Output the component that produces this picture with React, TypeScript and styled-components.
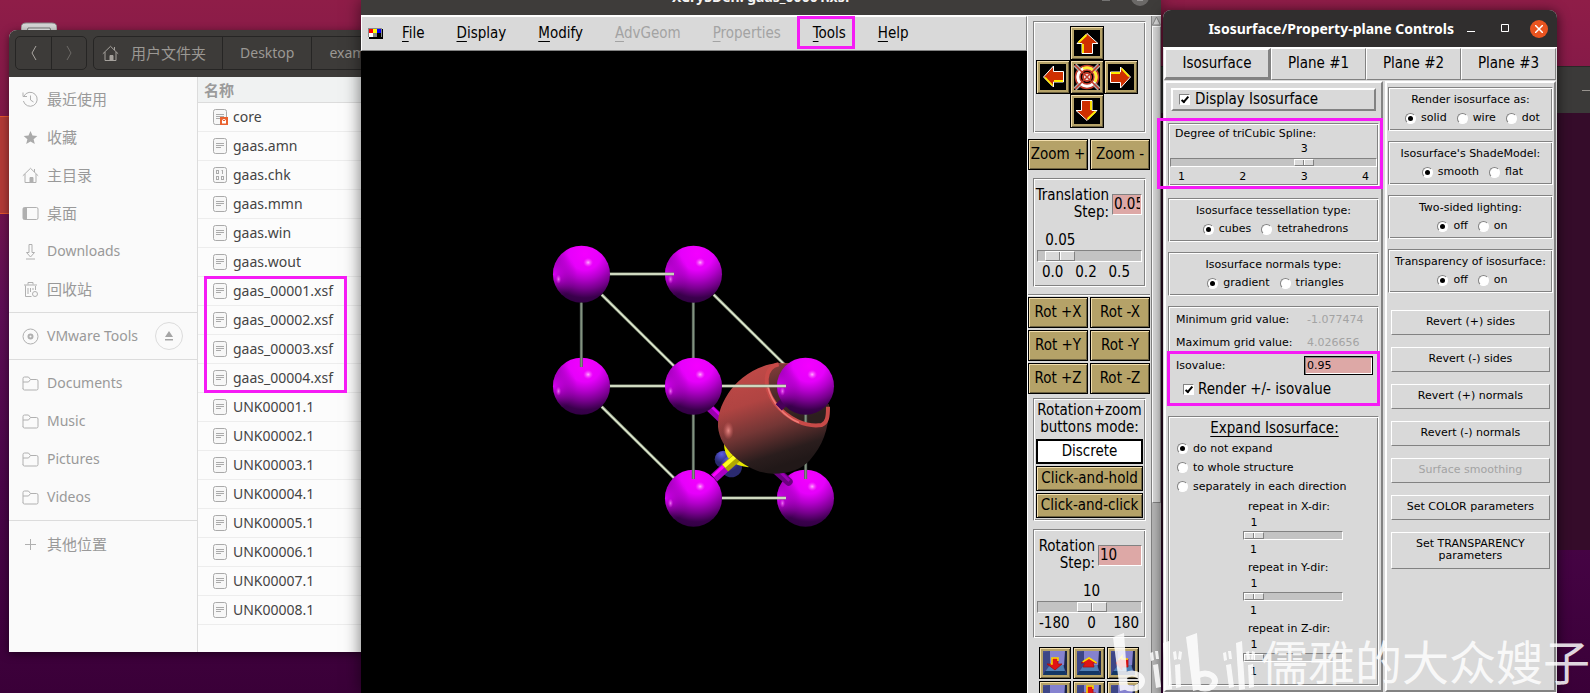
import React, { useId, useState } from "react";
import styled, { createGlobalStyle, css } from "styled-components";

const ubuntu = `"Noto Sans", "Noto Sans CJK SC", sans-serif`;
const tk = `"DejaVu Sans Condensed", "DejaVu Sans", sans-serif`;
const tkSmall = `"DejaVu Sans", sans-serif`;
const FACE = "#d9d9d9";
const DARK = "#828282";
const TAN = "#b5a268";

const GlobalStyle = createGlobalStyle`
  *, *::before, *::after { box-sizing: border-box; }
  body { margin: 0; overflow: hidden; }
  button, input { font: inherit; color: inherit; margin: 0; }
  button { padding: 0; border: 0; background: none; }
`;

const groove = css`
  border: 1px solid;
  border-color: ${DARK} #fff #fff ${DARK};
  box-shadow: inset 1px 1px 0 #fff, inset -1px -1px 0 ${DARK};
`;

const highlight = css`
  position: relative;
  &::after {
    content: "";
    position: absolute;
    border: 3px solid #f51bf5;
    pointer-events: none;
    z-index: 2;
  }
`;

/* ---------- desktop ---------- */

const Desktop = styled.main`
  position: relative;
  height: 100vh;
  overflow: hidden;
  background: linear-gradient(180deg, #8f1d48 0%, #7d1748 20%, #5e0e55 44%, #4a0549 70%, #3a0038 100%);
`;

const Drive = styled.svg`
  position: absolute;
  left: 21px;
  top: 22px;
`;

const OrangeWindow = styled.div`
  position: absolute;
  left: 0;
  top: 116px;
  width: 40px;
  height: 98px;
  background: #b23a36;
  border: solid #e2552a;
  border-width: 1px 0;
`;

const TerminalWindow = styled.div`
  position: absolute;
  right: 0;
  top: 66px;
  width: 480px;
  height: 484px;
  background: #350c2a;
  border-top: 1px solid #2a2827;
`;

const TerminalBar = styled.div`
  display: flex;
  justify-content: flex-end;
  align-items: center;
  height: 46px;
  background: #3b3a39;
  &::after {
    content: "";
    width: 8px;
    height: 1px;
    background: #98948f;
  }
`;

/* ---------- file manager ---------- */

const Files = styled.section`
  position: absolute;
  left: 9px;
  top: 30px;
  width: 480px;
  display: flex;
  flex-direction: column;
  border-radius: 8px 8px 0 0;
  background: #fcfcfc;
  box-shadow: 0 2px 8px rgba(0, 0, 0, 0.5);
  font: 14px/20px ${ubuntu};
`;

const HeaderBar = styled.header`
  display: flex;
  gap: 6px;
  height: 47px;
  padding: 6px;
  border-radius: 8px 8px 0 0;
  background: #3d3b39;
  color: #9b9894;
`;

const ButtonGroup = styled.div`
  display: flex;
  height: 34px;
  border: 1px solid #262524;
  border-radius: 5px;
`;

const HeaderButton = styled.button<{ $path?: boolean }>`
  display: flex;
  align-items: center;
  justify-content: center;
  gap: 12px;
  min-width: 35px;
  font-size: 14px;
  padding: ${(p) => (p.$path ? "0 17px" : "0")};
  white-space: nowrap;
  & + & { border-left: 1px solid #262524; }
`;

const HomeButton = styled(HeaderButton)`
  padding: 0 16px 0 8px;
  font-size: 15px;
`;

const FilesBody = styled.div`
  display: flex;
  min-height: 575px;
`;

const Sidebar = styled.nav`
  width: 189px;
  padding-top: 3px;
  background: #fafafa;
  border-right: 1px solid #dcdcdc;
  color: #999;
`;

const Places = styled.ul`
  list-style: none;
  margin: 0;
  padding: 0 0 4px;
  & + & { border-top: 1px solid #dcdcdc; padding-top: 4px; }
`;

const Place = styled.li`
  display: flex;
  align-items: center;
  justify-content: space-between;
  height: 38px;
  padding: 0 14px 0 13px;
`;

const PlaceLink = styled.a<{ $cjk?: boolean }>`
  display: flex;
  align-items: center;
  gap: 8px;
  color: inherit;
  text-decoration: none;
  white-space: nowrap;
  font-size: ${(p) => (p.$cjk ? 15 : 14)}px;
  svg { stroke: #b0b0b0; fill: none; }
`;

const Eject = styled.button`
  display: grid;
  place-items: center;
  width: 28px;
  height: 28px;
  border: 1px solid #dcdcdc;
  border-radius: 50%;
`;

const FileTable = styled.table`
  flex: 1;
  align-self: flex-start;
  border-spacing: 0;
  color: #444;
  thead th {
    height: 26px;
    padding: 0 6px;
    text-align: left;
    font-size: 15px;
    line-height: 20px;
    color: #9b9b9b;
    background: #f0f2f2;
    border-bottom: 1px solid #dcdcdc;
  }
  td {
    height: 29px;
    padding: 0 0 0 15px;
    border-bottom: 1px solid #ededed;
  }
`;

const FileGroup = styled.tbody<{ $marked?: boolean }>`
  ${(p) => p.$marked && highlight}
  &::after {
    left: 6px;
    top: -1px;
    bottom: 0;
    width: 143px;
  }
`;

const FileName = styled.span`
  display: flex;
  align-items: center;
  gap: 6px;
`;

/* ---------- crystal viewer ---------- */

const Viewer = styled.section`
  position: absolute;
  left: 361px;
  right: 429px;
  top: 0;
  bottom: 0;
  display: flex;
  flex-direction: column;
  background: ${FACE};
  box-shadow: 0 0 16px rgba(0, 0, 0, 0.55);
  font: 15px/17px ${tk};
  color: #000;
`;

const ViewerTitle = styled.header`
  position: relative;
  display: flex;
  align-items: flex-end;
  justify-content: center;
  flex: none;
  height: 16px;
  padding-bottom: 8px;
  background: #3e3c3a;
  color: #f4f3f2;
  font: bold 14px/20px ${ubuntu};
  border-bottom: 1px solid #fff;
  overflow: hidden;
`;

const ViewerButtons = styled.svg`
  position: absolute;
  right: 4px;
  top: 0;
`;

const ViewerBody = styled.div`
  flex: 1;
  display: flex;
  min-height: 0;
`;

const ViewerMain = styled.div`
  flex: 1;
  display: flex;
  flex-direction: column;
  min-width: 0;
`;

const MenuBar = styled.nav`
  display: flex;
  align-items: center;
  height: 35px;
  padding: 0 6px;
  border: 1px solid;
  border-color: #fff ${DARK} ${DARK} #fff;
`;

const MenuIcon = styled.svg`
  margin-right: 3px;
`;

const MenuButton = styled.button<{ $marked?: boolean }>`
  height: 33px;
  padding: 0 16px;
  &:disabled { color: #a3a3a3; }
  &::first-letter { text-decoration: underline; text-underline-offset: 3px; }
  ${(p) => p.$marked && highlight}
  &::after { inset: -1px 7px 1px 0; }
`;

const Canvas = styled.div`
  flex: 1;
  display: flex;
  justify-content: center;
  align-items: flex-start;
  padding: 179px 0 0 2px;
  background: #000;
  overflow: hidden;
`;

const ToolPanel = styled.aside`
  width: 124px;
  padding: 5px 1px 0 0;
  overflow: hidden;
  border-left: 1px solid #fff;
`;

const ScrollTrack = styled.div`
  display: flex;
  flex-direction: column;
  width: 10px;
  background: #b5b5b5;
  border-left: 1px solid ${DARK};
`;

const ScrollThumb = styled.div`
  height: 477px;
  background: ${FACE};
  border: 1px solid;
  border-color: #fff ${DARK} ${DARK} #fff;
`;

const ToolFrame = styled.fieldset`
  ${groove}
  margin: 0 4px 8px 5px;
  padding: 8px 3px 5px;
  min-width: 0;
`;

const NavFrame = styled(ToolFrame)`
  display: grid;
  grid-template-columns: repeat(3, 34px);
  margin-bottom: 6px;
  padding: 4px 0 4px 2px;
`;

const NavButton = styled.button<{ $column?: number }>`
  display: grid;
  place-items: center;
  height: 34px;
  border: 1px solid #000;
  background: ${TAN};
  box-shadow: inset 1px 1px 0 #f3dfae, inset -1px -1px 0 #6c6140;
  grid-column: ${(p) => p.$column ?? "auto"};
`;

const PairGrid = styled.div<{ $ruled?: boolean }>`
  display: grid;
  grid-template-columns: 1fr 1fr;
  gap: 2px;
  margin-bottom: ${(p) => (p.$ruled ? 4 : 8)}px;
  padding-top: ${(p) => (p.$ruled ? 2 : 0)}px;
  border-top: ${(p) => (p.$ruled ? `1px solid ${DARK}` : "0")};
  box-shadow: ${(p) => (p.$ruled ? "inset 0 1px 0 #fff" : "none")};
`;

const TanButton = styled.button<{ $short?: boolean; $on?: boolean }>`
  height: ${(p) => (p.$short ? 25 : 31)}px;
  border: 1px solid #000;
  background: ${(p) => (p.$on ? "#fff" : TAN)};
  box-shadow: inset 1px 1px 0 ${(p) => (p.$on ? "#000" : "#f3dfae")},
    inset -1px -1px 0 ${(p) => (p.$on ? "#000" : "#6c6140")};
  white-space: nowrap;
`;

const StepFrame = styled(ToolFrame)<{ $tight?: boolean }>`
  margin-bottom: ${(p) => (p.$tight ? 7 : 8)}px;
`;

const ModeFrame = styled(ToolFrame)`
  display: flex;
  flex-direction: column;
  gap: 2px;
  padding: 3px 2px 2px;
  text-align: center;
`;

const ModeTitle = styled.div`
  padding-bottom: 1px;
  white-space: nowrap;
`;

const StepLabel = styled.label`
  display: flex;
  align-items: center;
  justify-content: flex-end;
  gap: 3px;
  margin-bottom: 11px;
  text-align: right;
`;

const StepInput = styled.input<{ $width: number }>`
  flex: none;
  width: ${(p) => p.$width}px;
  height: 21px;
  padding: 0 1px;
  background: #dda8a6;
  border: 1px solid;
  border-color: ${DARK} #fff #fff ${DARK};
`;

const ViewGrid = styled.div`
  display: grid;
  grid-template-columns: repeat(3, 32px);
  gap: 2px;
  justify-content: center;
  margin-top: 9px;
`;

const ViewButton = styled.button`
  height: 32px;
  padding: 1px;
  border: 1px solid #000;
  background: ${TAN};
  box-shadow: inset 1px 1px 0 #f3dfae, inset -1px -1px 0 #6c6140;
  svg { display: block; }
`;

/* ---------- scale ---------- */

const ScaleBox = styled.div`
  display: flex;
  flex-direction: column;
`;

const ScaleValue = styled.output<{ $thumb: number; $line: number }>`
  display: grid;
  justify-items: center;
  white-space: nowrap;
  padding: 0 ${(p) => p.$thumb / 2 + 1}px;
  line-height: ${(p) => p.$line}px;
  span { grid-column: 2; }
`;

const Range = styled.input<{ $thumb: number; $tall: number }>`
  appearance: none;
  display: block;
  width: 100%;
  height: ${(p) => p.$tall}px;
  margin: 1px 0 2px;
  background: #c3c3c3;
  border: 1px solid;
  border-color: ${DARK} #fff #fff ${DARK};
  &::-webkit-slider-runnable-track { height: 100%; }
  &::-webkit-slider-thumb {
    appearance: none;
    width: ${(p) => p.$thumb}px;
    height: 100%;
    border: 1px solid;
    border-color: #fff ${DARK} ${DARK} #fff;
    border-radius: 0;
    background: linear-gradient(90deg, transparent 45%, ${DARK} 45%, ${DARK} 50%, #fff 50%, #fff 55%, transparent 55%) ${FACE};
  }
`;

const Ticks = styled.div<{ $pad: string; $line: number }>`
  display: flex;
  justify-content: space-between;
  padding: ${(p) => p.$pad};
  line-height: ${(p) => p.$line}px;
`;

interface ScaleProps {
  label: string;
  min: number;
  max: number;
  step: number;
  initial: number;
  ticks: string[];
  pad: string;
  thumb: number;
  tall: number;
  line: number;
}

function Scale({ label, min, max, step, initial, ticks, pad, thumb, tall, line }: ScaleProps) {
  const [value, setValue] = useState(initial);
  const f = (value - min) / (max - min);
  return (
    <ScaleBox>
      <ScaleValue $thumb={thumb} $line={line} style={{ gridTemplateColumns: `${f}fr 0 ${1 - f}fr` }}>
        <span>{value}</span>
      </ScaleValue>
      <Range
        type="range"
        aria-label={label}
        min={min}
        max={max}
        step={step}
        value={value}
        $thumb={thumb}
        $tall={tall}
        onChange={(e) => setValue(Number(e.target.value))}
      />
      <Ticks $pad={pad} $line={line}>
        {ticks.map((t) => (
          <span key={t}>{t}</span>
        ))}
      </Ticks>
    </ScaleBox>
  );
}

/* ---------- isosurface controls ---------- */

const Controls = styled.section`
  position: absolute;
  right: 33px;
  top: 10px;
  bottom: 0;
  width: 394px;
  border-radius: 8px 8px 0 0;
  background: ${FACE};
  box-shadow: 0 2px 12px 1px rgba(0, 0, 0, 0.6);
  font: 11px/15px ${tkSmall};
  color: #000;
`;

const ControlsTitle = styled.header`
  display: flex;
  align-items: center;
  justify-content: flex-end;
  height: 37px;
  padding-right: 9px;
  border-radius: 8px 8px 0 0;
  background: #302e2e;
  color: #fff;
  h1 {
    flex: 1;
    margin: 0;
    text-align: right;
    font: bold 14px/20px ${ubuntu};
    white-space: nowrap;
  }
`;

const TitleButton = styled.button<{ $close?: boolean }>`
  display: grid;
  place-items: center;
  width: ${(p) => (p.$close ? 18 : 34)}px;
  height: 18px;
  margin-left: ${(p) => (p.$close ? 8 : 0)}px;
  border-radius: 50%;
  background: ${(p) => (p.$close ? "#e95420" : "none")};
`;

const Tabs = styled.div`
  display: grid;
  grid-template-columns: 107px repeat(3, 1fr);
  height: 34px;
  padding: 0 1px 1px;
  border-top: 1px solid #fff;
  font: 15px/17px ${tk};
`;

const Tab = styled.button<{ $on?: boolean }>`
  border-style: solid;
  border-width: ${(p) => (p.$on ? "2px 3px 3px 2px" : "1px")};
  border-color: #fff ${DARK} ${DARK} #fff;
  padding-bottom: ${(p) => (p.$on ? 0 : 2)}px;
`;

const Columns = styled.div`
  display: flex;
  gap: 2px;
  padding: 0 2px 0 1px;
  border-bottom: 1px solid #fff;
`;

const Column = styled.div<{ $left?: boolean }>`
  display: flex;
  flex-direction: column;
  flex: ${(p) => (p.$left ? "0 0 219px" : 1)};
  padding: ${(p) => (p.$left ? "5px 2px 4px" : "4px 1px")};
  gap: 10px;
  border: 2px solid;
  border-color: #fff ${DARK} ${DARK} #fff;
`;

const DisplayToggle = styled.label`
  display: flex;
  align-items: center;
  gap: 5px;
  height: 23px;
  margin: 0 3px 2px;
  padding-left: 6px;
  border: 2px solid;
  border-color: #fff ${DARK} ${DARK} #fff;
  font: 15px/17px ${tk};
`;

const Check = styled.input`
  appearance: none;
  width: 11px;
  height: 11px;
  background: #fff;
  border: 1px solid;
  border-color: ${DARK} #fff #fff ${DARK};
  display: grid;
  &:checked::before {
    content: "";
    width: 4px;
    height: 8px;
    margin-left: 3px;
    border: solid #000;
    border-width: 0 2px 2px 0;
    transform: rotate(40deg);
  }
`;

const Radio = styled.input`
  appearance: none;
  display: grid;
  place-items: center;
  width: 11px;
  height: 11px;
  border-radius: 50%;
  background: #fff;
  border: 1px solid;
  border-color: ${DARK} #fff #fff ${DARK};
  &:checked::before {
    content: "";
    width: 5px;
    height: 5px;
    border-radius: 50%;
    background: #000;
  }
`;

const Panel = styled.fieldset`
  ${groove}
  margin: 0;
  padding: 3px 6px;
  min-width: 0;
`;

const SplinePanel = styled(Panel)`
  ${highlight}
  margin-bottom: 2px;
  padding: 2px 1px 0;
  &::after { inset: -6px -5px -4px -12px; }
`;

const PanelTitle = styled.div<{ $start?: boolean }>`
  text-align: ${(p) => (p.$start ? "left" : "center")};
  padding-left: ${(p) => (p.$start ? 5 : 0)}px;
  line-height: ${(p) => (p.$start ? 15 : 18)}px;
  white-space: nowrap;
`;

const RadioRow = styled.div`
  display: flex;
  justify-content: center;
  gap: 10px;
  padding-left: 4px;
`;

const RadioLabel = styled.label<{ $line?: number }>`
  display: flex;
  align-items: center;
  gap: 5px;
  line-height: ${(p) => p.$line ?? 18}px;
`;

const GridPanel = styled(Panel)`
  ${highlight}
  padding: 1px 5px 3px 7px;
  &::after { inset: 44px -2px -1px -2px; }
`;

const GridRow = styled.label`
  display: flex;
  align-items: center;
  justify-content: space-between;
  height: 23px;
  output { width: 66px; color: #a3a3a3; }
`;

const IsoInput = styled.input`
  width: 69px;
  height: 19px;
  padding: 0 2px;
  background: #dda8a6;
  border: 1px solid #000;
  box-shadow: inset 1px 1px 0 ${DARK}, inset -1px -1px 0 #fff;
`;

const RenderToggle = styled.label`
  display: flex;
  align-items: center;
  gap: 4px;
  height: 25px;
  padding-left: 7px;
  font: 15px/17px ${tk};
`;

const ExpandPanel = styled(Panel)`
  padding: 2px 6px 3px 8px;
`;

const ExpandTitle = styled.div`
  margin-bottom: 2px;
  text-align: center;
  font: 15px/18px ${tk};
  text-decoration: underline;
  text-underline-offset: 3px;
`;

const Repeat = styled.div`
  width: 100px;
  margin: 3px 0 3px 66px;
  white-space: nowrap;
`;

const RepeatTitle = styled.div`
  padding-left: 5px;
  line-height: 16px;
`;

const Actions = styled.div`
  display: flex;
  flex-direction: column;
  gap: 12px;
  margin: 7px 3px 0;
`;

const Action = styled.button`
  padding: 5px 6px 6px;
  line-height: 12px;
  border: 1px solid;
  border-color: #fff ${DARK} ${DARK} #fff;
  &:disabled { color: #a3a3a3; }
`;

function Choice({ title, options }: { title: string; options: string[] }) {
  const name = useId();
  return (
    <Panel>
      <PanelTitle>{title}</PanelTitle>
      <RadioRow>
        {options.map((o, i) => (
          <RadioLabel key={o}>
            <Radio type="radio" name={name} defaultChecked={i === 0} />
            {o}
          </RadioLabel>
        ))}
      </RadioRow>
    </Panel>
  );
}

/* ---------- watermark ---------- */

const Watermark = styled.div`
  position: absolute;
  right: 0;
  bottom: 0;
  z-index: 5;
  display: flex;
  align-items: flex-end;
  gap: 3px;
  color: #fff;
  opacity: 0.84;
  font: 47px/66px "Noto Sans CJK SC", sans-serif;
  white-space: nowrap;
  pointer-events: none;
`;

function Logo() {
  const b = (x: number) => (
    <g transform={`translate(${x} 0)`}>
      <polygon points="0,6 11,2 15,58 7,60" />
      <ellipse cx="19" cy="50" rx="10" ry="7.5" fill="none" stroke="#fff" strokeWidth="6" />
    </g>
  );
  const bars = (x: number) => (
    <g transform={`translate(${x} 0)`}>
      <polygon points="2,34 7,33 10,56 5,57" />
      <polygon points="-1,22 2,21 3,29 0,30" />
      <polygon points="4,20 7,20 8,28 5,28" />
      <polygon points="12,12 18,10 21,58 15,59" />
      <polygon points="24,34 29,33 30,56 25,57" />
      <polygon points="22,21 25,20 26,28 23,29" />
      <polygon points="28,20 31,21 30,29 27,28" />
    </g>
  );
  return (
    <svg width="145" height="62" fill="#fff" aria-hidden="true">
      {b(0)}
      {bars(38)}
      {b(73)}
      {bars(111)}
    </svg>
  );
}

/* ---------- drawings ---------- */

type PlaceIcon = "recent" | "star" | "home" | "desktop" | "down" | "trash" | "disc" | "folder" | "plus";

function Glyph({ kind, size = 17, color }: { kind: PlaceIcon; size?: number; color?: string }) {
  const shapes: Record<PlaceIcon, React.ReactNode> = {
    recent: (
      <>
        <path d="M2 5a7 7 0 1 1-.6 5" />
        <path d="M1 1.500v4h4M8.500 4.500v4.500l3 2" />
      </>
    ),
    star: <path d="M8.500 2l2 4.600 4.800.4-3.700 3.200 1.200 4.800-4.300-2.600L4.200 15l1.200-4.800L1.700 7l4.800-.4z" fill="#aaa" stroke="none" />,
    home: (
      <>
        <path d="M.8 8.800 8.500 1.300l7.700 7.500M3 7v8.500h11V7M12.500 5V2" />
        <path d="M8 15v-4.500h3V15z" fill={color ?? "#b0b0b0"} />
      </>
    ),
    desktop: (
      <>
        <rect x="1" y="2.500" width="15" height="12" rx="1.500" />
        <path d="M1.500 3h3v11h-3z" fill="#b0b0b0" />
      </>
    ),
    down: <path d="M7 1.500h3v8h2.500l-4 4.500-4-4.500H7zM4 16h9" />,
    trash: (
      <>
        <path d="M2 4h13M6 3.500V1.500h5v2M3.500 4.500v11h6M6 7v6M8.500 7v4M11 7v2M13.500 5v4" />
        <circle cx="13" cy="13" r="2.500" />
      </>
    ),
    disc: (
      <>
        <circle cx="8.500" cy="8.500" r="7.500" />
        <circle cx="8.500" cy="8.500" r="2" strokeWidth="2" />
      </>
    ),
    folder: <path d="M1 14V3.500Q1 2 2.500 2h4l2 2.500h6Q16 4.500 16 6v7.500q0 1.500-1.500 1.500h-12Q1 15 1 13.500M1 7h5.500l2-2.500" />,
    plus: <path d="M8.500 3v11M3 8.500h11" />,
  };
  return (
    <svg width={size} height={size} viewBox="0 0 17 17" stroke={color} fill="none" aria-hidden="true">
      {shapes[kind]}
    </svg>
  );
}

function FileIcon({ kind }: { kind?: string }) {
  return (
    <svg width="14" height="17" viewBox="0 0 14 17" fill="none" overflow="visible" aria-hidden="true">
      <rect x=".5" y=".5" width="13" height="15" rx="2" fill="#f7f7f7" stroke="#aaa" />
      {kind === "binary" ? (
        <g stroke="#aaa">
          <rect x="3.500" y="3.500" width="2" height="3" />
          <path d="M9.500 3v4M8.500 3.500h1" />
          <rect x="3.500" y="9.500" width="2" height="3" />
          <rect x="8.500" y="9.500" width="2" height="3" />
        </g>
      ) : (
        <path d="M3 5.500h8M3 7.500h8M3 9.500h5" stroke="#aaa" />
      )}
      {kind === "locked" && (
        <>
          <rect x="7" y="8" width="8" height="8" fill="#e9622f" />
          <path d="M9 12h4v2.500H9z" fill="#fff" />
          <path d="M9.500 12v-1q1.500-1.500 3 0v1" stroke="#fff" strokeWidth=".8" />
        </>
      )}
    </svg>
  );
}

function Arrow({ turn }: { turn: number }) {
  return (
    <svg width="26" height="26" viewBox="0 0 26 26" aria-hidden="true">
      <path d="M0 0h26v26H0z" fill="#000" />
      <g transform={`rotate(${turn} 13 13) translate(2 2)`}>
        <path d="M11 1.500 22 11.500H16.500V21.500H6V11.500H1z" fill="#cf3000" stroke="#fff" strokeWidth="1" />
        <path d="M2.500 10.500 10.500 3M7 12V21" fill="none" stroke="#ffee00" strokeWidth="1.800" />
      </g>
    </svg>
  );
}

function Target() {
  return (
    <svg width="28" height="28" viewBox="0 0 28 28" fill="none" aria-hidden="true">
      <path d="M1 1h26v26H1z" fill="#000" />
      <circle cx="14" cy="14" r="9" stroke="#fff" strokeWidth="4" />
      <path d="M10 5.500A9.500 9.500 0 0 1 22 19" stroke="#ffee33" strokeWidth="3" />
      <circle cx="14" cy="14" r="11.500" stroke="#c33a2a" strokeWidth="1.500" />
      <circle cx="14" cy="14" r="7" stroke="#c33a2a" strokeWidth="1.500" />
      <circle cx="14" cy="14" r="4" fill="#eee" stroke="#c33a2a" strokeWidth="2" />
      <path d="M2 2l5 5M26 2l-5 5M2 26l5-5M26 26l-5-5" stroke="#aaa" strokeWidth="4" />
      <path d="M2 2l24 24M26 2 2 26" stroke="#c33a2a" strokeWidth="1.500" />
    </svg>
  );
}

function ViewIcon({ kind }: { kind: number }) {
  const arrows = [
    "M11 9h6v6h4l-7 6-8-6h5z",
    "M14 9l8 5h-4l1 4H8l2-4H6z",
    "M13 7v3h6v8h-6v3l-6-7z",
    "M8 15h12v12H8z",
    "M12 3h6v7h3l-7 6-7-6h5z",
    "M7 15h13v12H7z",
  ];
  const pale = kind === 3 || kind === 5;
  return (
    <svg width="28" height="28" viewBox="0 0 28 28" aria-hidden="true">
      <path d="M2 2h24v24H2z" fill="#4a4f93" />
      <path d="M9 2h15v14H9z" fill="#8582cf" />
      <path d="M2 4l7-2v14L2 25z" fill="#3d4687" />
      <path d="M9 16h13l2 7H4z" fill="#4f7fb5" />
      <path d="M2 26l2-4h20l2 4z" fill="#143765" />
      <path d="M24 2h2v24l-3-8z" fill="#1a2446" />
      <path d={arrows[kind]} fill={pale ? "#b9d3e3" : "#e01414"} stroke={pale ? "#223" : "#a80c0c"} strokeWidth=".8" />
      {!pale && <path d={arrows[kind]} fill="none" stroke="#ffe000" strokeWidth="1.500" strokeDasharray="9 30" />}
    </svg>
  );
}

function Sphere({ x, y }: { x: number; y: number }) {
  return (
    <g transform={`translate(${x} ${y})`}>
      <circle r="85.500" fill="url(#atom)" />
      <circle r="85.500" fill="url(#atomSide)" />
      <ellipse cx="20" cy="-35" rx="15" ry="14" fill="url(#glint)" />
      <ellipse cx="-69" cy="15" rx="8" ry="14" fill="url(#glint)" opacity=".7" />
    </g>
  );
}

function Rod({ d, dim }: { d: string; dim?: boolean }) {
  return (
    <>
      <path d={d} stroke={dim ? "#55645a" : "#8b9880"} strokeWidth="9" />
      <path d={d} stroke={dim ? "#83927f" : "#e6efd6"} strokeWidth="4" />
    </>
  );
}

function Crystal() {
  const body =
    "M715 400C650 402 590 450 565 490C540 530 534 555 534 590C540 665 630 731 700 731C755 730 785 715 808 692C850 645 868 595 866 525L800 400Z";
  return (
    <svg width="310" height="310" viewBox="0 0 930 930" fill="none" role="img" aria-label="GaAs crystal structure">
      <defs>
        <radialGradient id="atom" cx=".56" cy=".14" r=".86">
          <stop offset="0" stopColor="#f400ff" />
          <stop offset=".33" stopColor="#e600fb" />
          <stop offset=".52" stopColor="#b400cc" />
          <stop offset=".72" stopColor="#78008e" />
          <stop offset=".9" stopColor="#3a004c" />
          <stop offset="1" stopColor="#320044" />
        </radialGradient>
        <radialGradient id="atomSide" cx="0" cy=".5" r=".42">
          <stop offset="0" stopColor="#e000ff" stopOpacity=".95" />
          <stop offset=".4" stopColor="#c800e0" stopOpacity=".6" />
          <stop offset="1" stopColor="#9000a8" stopOpacity="0" />
        </radialGradient>
        <radialGradient id="glint">
          <stop offset="0" stopColor="#ffb0ff" />
          <stop offset="1" stopColor="#ff40ff" stopOpacity="0" />
        </radialGradient>
        <radialGradient id="lobeGlint">
          <stop offset="0" stopColor="#e68a86" />
          <stop offset="1" stopColor="#d06060" stopOpacity="0" />
        </radialGradient>
        <linearGradient id="lobe" x1=".3" y1="0" x2=".6" y2=".92">
          <stop offset="0" stopColor="#c24a48" />
          <stop offset=".35" stopColor="#b04442" />
          <stop offset=".62" stopColor="#743635" />
          <stop offset=".88" stopColor="#2a1d1d" />
          <stop offset="1" stopColor="#211818" />
        </linearGradient>
        <linearGradient id="lobeFade" gradientUnits="userSpaceOnUse" x1="540" y1="0" x2="700" y2="40">
          <stop offset="0" stopColor="#b84745" stopOpacity=".8" />
          <stop offset="1" stopColor="#a04040" stopOpacity="0" />
        </linearGradient>
        <linearGradient id="inside" x1="0" y1="0" x2=".4" y2="1">
          <stop offset="0" stopColor="#8a3f3d" />
          <stop offset=".5" stopColor="#4c2a29" />
          <stop offset="1" stopColor="#2c1f1e" />
        </linearGradient>
        <radialGradient id="blue" cx=".4" cy=".2">
          <stop offset="0" stopColor="#5c5ce6" />
          <stop offset="1" stopColor="#2a2a70" />
        </radialGradient>
      </defs>

      <Rod d="M205 132H380" />
      <Rod d="M185 194 402 408" />
      <Rod d="M521 194 738 408" />
      <Rod d="M205 468H380" />
      <Rod d="M460 215V390" dim />
      <Rod d="M185 530 402 744" />

      <Sphere x={124.5} y={132.5} />
      <Sphere x={460.500} y={132.5} />
      <Sphere x={124.5} y={468.5} />
      <Sphere x={460.500} y={804.5} />
      <Sphere x={796.500} y={804.5} />

      <Rod d="M124 218V411" dim />
      <Rod d="M375 132H402" />
      <Rod d="M460 550V747" dim />
      <Rod d="M797 550V747" dim />
      <Rod d="M546 804H738" />

      <path d="M505 530 560 582" stroke="#9800ae" strokeWidth="24" />
      <path d="M508 524 560 574" stroke="#d800f0" strokeWidth="7" />
      <Sphere x={460.500} y={468.5} />

      <circle cx="550" cy="688" r="26" fill="url(#blue)" />
      <circle cx="574" cy="710" r="32" fill="url(#blue)" />
      <path d="M552 640Q552 705 625 712L640 700 580 640Z" fill="#e6e600" />
      <path d="M522 744 568 702" stroke="#ac00c4" strokeWidth="28" />
      <path d="M519 738 560 700" stroke="#ff00ff" strokeWidth="9" />
      <path d="M555 714 600 674" stroke="#b0a800" strokeWidth="28" />
      <path d="M552 709 596 670" stroke="#ffff20" strokeWidth="12" />
      <path d="M700 714 746 755" stroke="#6b0080" strokeWidth="24" strokeLinecap="round" />
      <path d="M704 710 748 752" stroke="#9c00b4" strokeWidth="8" />

      <path d={body} fill="url(#lobe)" />
      <path d={body} fill="url(#lobeFade)" />
      <path
        d="M715 401C668 408 666 470 705 520C745 570 800 592 845 585C862 578 866 560 866 525L800 400Z"
        fill="url(#inside)"
      />
      <Rod d="M797 550V582" dim />
      <path d="M716 403C672 412 668 470 705 520C745 570 800 592 845 585C862 578 864 560 864 530" stroke="#c84a48" strokeWidth="12" />
      <path d="M684 472C696 520 735 560 775 577" stroke="#f07a76" strokeWidth="5" strokeLinecap="round" />
      <path d="M716 532 746 502" stroke="#480058" strokeWidth="26" />
      <ellipse cx="565" cy="602" rx="16" ry="27" fill="url(#lobeGlint)" />
      <Sphere x={796.500} y={468.5} />
      <Rod d="M546 468H738" />
    </svg>
  );
}

/* ---------- data ---------- */

const places: { icon: PlaceIcon; name: string; cjk?: boolean }[][] = [
  [
    { icon: "recent", name: "最近使用", cjk: true },
    { icon: "star", name: "收藏", cjk: true },
    { icon: "home", name: "主目录", cjk: true },
    { icon: "desktop", name: "桌面", cjk: true },
    { icon: "down", name: "Downloads" },
    { icon: "trash", name: "回收站", cjk: true },
  ],
  [{ icon: "disc", name: "VMware Tools" }],
  [
    { icon: "folder", name: "Documents" },
    { icon: "folder", name: "Music" },
    { icon: "folder", name: "Pictures" },
    { icon: "folder", name: "Videos" },
  ],
  [{ icon: "plus", name: "其他位置", cjk: true }],
];

const fileGroups = [
  ["core", "gaas.amn", "gaas.chk", "gaas.mmn", "gaas.win", "gaas.wout"],
  ["gaas_00001.xsf", "gaas_00002.xsf", "gaas_00003.xsf", "gaas_00004.xsf"],
  [1, 2, 3, 4, 5, 6, 7, 8].map((n) => `UNK0000${n}.1`),
];

const menus = ["File", "Display", "Modify", "AdvGeom", "Properties", "Tools", "Help"];

const fileKind = (name: string) => (name === "core" ? "locked" : name.endsWith(".chk") ? "binary" : undefined);

/* ---------- windows ---------- */

function FileManager() {
  return (
    <Files>
      <HeaderBar>
        <ButtonGroup>
          <HeaderButton aria-label="Back">
            <svg width="8" height="18" fill="none" stroke="#aaa6a1"><path d="M6 2 2 9l4 7" /></svg>
          </HeaderButton>
          <HeaderButton aria-label="Forward">
            <svg width="8" height="18" fill="none" stroke="#6d6a67"><path d="M2 2l4 7-4 7" /></svg>
          </HeaderButton>
        </ButtonGroup>
        <ButtonGroup>
          <HomeButton>
            <Glyph kind="home" color="#a5a19c" />
            用户文件夹
          </HomeButton>
          <HeaderButton $path>Desktop</HeaderButton>
          <HeaderButton $path>example</HeaderButton>
        </ButtonGroup>
      </HeaderBar>
      <FilesBody>
        <Sidebar>
          {places.map((group, i) => (
            <Places key={i}>
              {group.map((p) => (
                <Place key={p.name}>
                  <PlaceLink href="#" $cjk={p.cjk}>
                    <Glyph kind={p.icon} />
                    {p.name}
                  </PlaceLink>
                  {p.icon === "disc" && (
                    <Eject aria-label="Eject">
                      <svg width="10" height="10" fill="#a5a5a5"><path d="M5 0l4 6H1zM1 8h8v1.500H1z" /></svg>
                    </Eject>
                  )}
                </Place>
              ))}
            </Places>
          ))}
        </Sidebar>
        <FileTable>
          <thead>
            <tr><th>名称</th></tr>
          </thead>
          {fileGroups.map((group, i) => (
            <FileGroup key={i} $marked={i === 1}>
              {group.map((name) => (
                <tr key={name}>
                  <td>
                    <FileName>
                      <FileIcon kind={fileKind(name)} />
                      {name}
                    </FileName>
                  </td>
                </tr>
              ))}
            </FileGroup>
          ))}
        </FileTable>
      </FilesBody>
    </Files>
  );
}

function CrystalViewer() {
  const [mode, setMode] = useState("Discrete");
  return (
    <Viewer>
      <ViewerTitle>
        XCrySDen: gaas_00001.xsf
        <ViewerButtons width="60" height="8" aria-hidden="true">
          <circle cx="43" cy="-3" r="9" fill="#6b6967" />
          <path d="M40 0h6" stroke="#ccc" />
          <path d="M5 0h8" stroke="#aaa" />
        </ViewerButtons>
      </ViewerTitle>
      <ViewerBody>
        <ViewerMain>
          <MenuBar>
            <MenuIcon width="15" height="11" aria-hidden="true">
              <path d="M1 1h14v10H1z" fill="#000" />
              <path d="M0 0h14v9H0z" fill="#888" />
              <path d="M1 1h4v4H1z" fill="#f00" />
              <path d="M5 1h4v4H5z" fill="#ff0" />
              <path d="M9 1h4v4H9z" fill="#00f" />
              <path d="M1 5h4v4H1z" fill="#fff" />
              <path d="M9 5h4v4H9z" fill="#000" />
            </MenuIcon>
            {menus.map((m) => (
              <MenuButton key={m} disabled={m === "AdvGeom" || m === "Properties"} $marked={m === "Tools"}>
                {m}
              </MenuButton>
            ))}
          </MenuBar>
          <Canvas>
            <Crystal />
          </Canvas>
        </ViewerMain>
        <ToolPanel>
          <NavFrame>
            <NavButton $column={2} aria-label="Move up"><Arrow turn={0} /></NavButton>
            <NavButton $column={1} aria-label="Move left"><Arrow turn={270} /></NavButton>
            <NavButton $column={2} aria-label="Center"><Target /></NavButton>
            <NavButton $column={3} aria-label="Move right"><Arrow turn={90} /></NavButton>
            <NavButton $column={2} aria-label="Move down"><Arrow turn={180} /></NavButton>
          </NavFrame>
          <PairGrid>
            <TanButton>Zoom +</TanButton>
            <TanButton>Zoom -</TanButton>
          </PairGrid>
          <StepFrame $tight>
            <StepLabel>
              <span>Translation<br />Step:</span>
              <StepInput $width={30} defaultValue="0.05" />
            </StepLabel>
            <Scale label="Translation step" min={0} max={0.5} step={0.05} initial={0.05}
              ticks={["0.0", "0.2", "0.5"]} pad="0 12px 0 5px" thumb={30} tall={12} line={17} />
          </StepFrame>
          <PairGrid $ruled>
            {["Rot +X", "Rot -X", "Rot +Y", "Rot -Y", "Rot +Z", "Rot -Z"].map((r) => (
              <TanButton key={r}>{r}</TanButton>
            ))}
          </PairGrid>
          <ModeFrame>
            <ModeTitle>Rotation+zoom<br />buttons mode:</ModeTitle>
            {["Discrete", "Click-and-hold", "Click-and-click"].map((m) => (
              <TanButton key={m} $short $on={m === mode} onClick={() => setMode(m)}>{m}</TanButton>
            ))}
          </ModeFrame>
          <StepFrame>
            <StepLabel>
              <span>Rotation<br />Step:</span>
              <StepInput $width={44} defaultValue="10" />
            </StepLabel>
            <Scale label="Rotation step" min={-180} max={180} step={1} initial={10}
              ticks={["-180", "0", "180"]} pad="0 3px 0 2px" thumb={30} tall={12} line={17} />
          </StepFrame>
          <ViewGrid>
            {[0, 1, 2, 3, 4, 5].map((k) => (
              <ViewButton key={k} aria-label={`View ${k + 1}`}><ViewIcon kind={k} /></ViewButton>
            ))}
          </ViewGrid>
        </ToolPanel>
        <ScrollTrack>
          <svg width="9" height="10" aria-hidden="true">
            <path d="M4.500 1 8.500 9H.5z" fill={FACE} stroke={DARK} />
          </svg>
          <ScrollThumb />
        </ScrollTrack>
      </ViewerBody>
    </Viewer>
  );
}

function IsosurfaceControls() {
  const [tab, setTab] = useState("Isosurface");
  return (
    <Controls>
      <ControlsTitle>
        <h1>Isosurface/Property-plane Controls</h1>
        <TitleButton aria-label="Minimize">
          <svg width="8" height="8"><path d="M0 6.500h8" stroke="#fff" /></svg>
        </TitleButton>
        <TitleButton aria-label="Maximize">
          <svg width="9" height="9"><path d="M.5.5h7v7h-7z" fill="none" stroke="#fff" /></svg>
        </TitleButton>
        <TitleButton $close aria-label="Close">
          <svg width="8" height="8"><path d="M0 0l8 8M8 0 0 8" stroke="#fff" strokeWidth="1.500" /></svg>
        </TitleButton>
      </ControlsTitle>
      <Tabs role="tablist">
        {["Isosurface", "Plane #1", "Plane #2", "Plane #3"].map((t) => (
          <Tab key={t} role="tab" aria-selected={t === tab} $on={t === tab} onClick={() => setTab(t)}>{t}</Tab>
        ))}
      </Tabs>
      <Columns>
        <Column $left>
          <DisplayToggle><Check type="checkbox" defaultChecked />Display Isosurface</DisplayToggle>
          <SplinePanel>
            <PanelTitle $start>Degree of triCubic Spline:</PanelTitle>
            <Scale label="Degree of triCubic Spline" min={1} max={4} step={1} initial={3}
              ticks={["1", "2", "3", "4"]} pad="0 8px" thumb={20} tall={9} line={16} />
          </SplinePanel>
          <Choice title="Isosurface tessellation type:" options={["cubes", "tetrahedrons"]} />
          <Choice title="Isosurface normals type:" options={["gradient", "triangles"]} />
          <GridPanel>
            <GridRow as="div"><span>Minimum grid value:</span><output>-1.077474</output></GridRow>
            <GridRow as="div"><span>Maximum grid value:</span><output>4.026656</output></GridRow>
            <GridRow>Isovalue:<IsoInput defaultValue="0.95" /></GridRow>
            <RenderToggle><Check type="checkbox" defaultChecked />Render +/- isovalue</RenderToggle>
          </GridPanel>
          <ExpandPanel>
            <ExpandTitle>Expand Isosurface:</ExpandTitle>
            {["do not expand", "to whole structure", "separately in each direction"].map((o, i) => (
              <RadioLabel key={o} $line={19}>
                <Radio type="radio" name="expand" defaultChecked={i === 0} />
                {o}
              </RadioLabel>
            ))}
            {["X", "Y", "Z"].map((axis) => (
              <Repeat key={axis}>
                <RepeatTitle>repeat in {axis}-dir:</RepeatTitle>
                <Scale label={`repeat in ${axis}-dir`} min={1} max={10} step={1} initial={1}
                  ticks={["1"]} pad="0 7px" thumb={20} tall={9} line={15} />
              </Repeat>
            ))}
          </ExpandPanel>
        </Column>
        <Column>
          <Choice title="Render isosurface as:" options={["solid", "wire", "dot"]} />
          <Choice title="Isosurface's ShadeModel:" options={["smooth", "flat"]} />
          <Choice title="Two-sided lighting:" options={["off", "on"]} />
          <Choice title="Transparency of isosurface:" options={["off", "on"]} />
          <Actions>
            <Action>Revert (+) sides</Action>
            <Action>Revert (-) sides</Action>
            <Action>Revert (+) normals</Action>
            <Action>Revert (-) normals</Action>
            <Action disabled>Surface smoothing</Action>
            <Action>Set COLOR parameters</Action>
            <Action>Set TRANSPARENCY parameters</Action>
          </Actions>
        </Column>
      </Columns>
    </Controls>
  );
}

export default function App() {
  return (
    <Desktop>
      <GlobalStyle />
      <Drive width="36" height="14" aria-hidden="true">
        <path d="M0 14V6q0-5 5-5h26q5 0 5 5v8z" fill="#d8d8d8" stroke="#8a8a8a" />
        <path d="M5 14l2-8h22l2 8z" fill="#f4f4f4" stroke="#777" />
      </Drive>
      <OrangeWindow />
      <TerminalWindow><TerminalBar /></TerminalWindow>
      <FileManager />
      <CrystalViewer />
      <IsosurfaceControls />
      <Watermark>
        <Logo />
        儒雅的大众嫂子
      </Watermark>
    </Desktop>
  );
}
